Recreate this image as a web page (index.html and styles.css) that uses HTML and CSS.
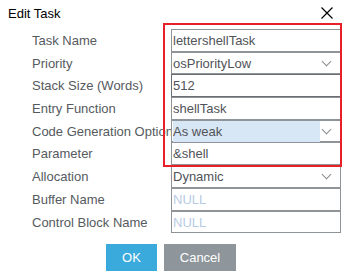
FILE: index.html
```html
<!DOCTYPE html>
<html lang="en">
<head>
    <meta charset="UTF-8">
    <title>Edit Task</title>
    <link rel="stylesheet" href="styles.css">
</head>
<body>
    <div class="dialog">
        <header class="dialog-header">
            <span class="dialog-title">Edit Task</span>
            <button class="close-button" aria-label="Close">
                <svg width="12" height="12" viewBox="0 0 12 12">
                    <path d="M0.5 0.5 L11.5 11.5 M11.5 0.5 L0.5 11.5" stroke="#000" stroke-width="1.2" fill="none"/>
                </svg>
            </button>
        </header>

        <form class="task-form">
            <div class="highlight-box"></div>

            <label class="field-label">Task Name</label>
            <div class="field">lettershellTask</div>

            <label class="field-label">Priority</label>
            <div class="field select">osPriorityLow<span class="chevron"></span></div>

            <label class="field-label">Stack Size (Words)</label>
            <div class="field focused">512</div>

            <label class="field-label">Entry Function</label>
            <div class="field">shellTask</div>

            <label class="field-label">Code Generation Option</label>
            <div class="field select selected"><span class="selected-text">As weak</span><span class="chevron"></span></div>

            <label class="field-label">Parameter</label>
            <div class="field">&amp;shell</div>

            <label class="field-label">Allocation</label>
            <div class="field select">Dynamic<span class="chevron"></span></div>

            <label class="field-label">Buffer Name</label>
            <div class="field placeholder">NULL</div>

            <label class="field-label">Control Block Name</label>
            <div class="field placeholder">NULL</div>
        </form>

        <div class="dialog-actions">
            <button class="btn btn-ok">OK</button>
            <button class="btn btn-cancel">Cancel</button>
        </div>
    </div>
</body>
</html>
```

FILE: styles.css
```css
/* Общие стили */
* {
    margin: 0;
    padding: 0;
    box-sizing: border-box;
    font-family: "Liberation Sans", Arial, sans-serif;
}

body {
    background: white;
}

.dialog {
    width: 342px;
    height: 274px;
    background: white;
    overflow: hidden;
}

/* Шапка */
.dialog-header {
    display: flex;
    justify-content: space-between;
    align-items: center;
    height: 26px;
    padding: 0 9px 0 8px;
}

.dialog-title {
    font-size: 13px;
    color: #000;
}

.close-button {
    border: none;
    background: transparent;
    display: flex;
    align-items: center;
    cursor: pointer;
}

/* Форма */
.task-form {
    position: relative;
    display: grid;
    grid-template-columns: 139px 170px;
    grid-auto-rows: 22.7px;
    padding: 3px 0 0 32px;
}

.field-label {
    font-size: 13px;
    color: #555a60;
    line-height: 23px;
    white-space: nowrap;
}

.field {
    position: relative;
    border: 1px solid #8f9499;
    font-size: 13px;
    color: #505358;
    line-height: 21px;
    padding-left: 1px;
    background: white;
}

.field.focused {
    border-color: #6a6e73;
}

.selected-text {
    display: block;
    width: 147px;
    background: #d8e7f5;
}

.field.placeholder {
    color: #b7cbe4;
}

.chevron {
    position: absolute;
    right: 10px;
    top: 5px;
    width: 7px;
    height: 7px;
    border-right: 1px solid #8a8e93;
    border-bottom: 1px solid #8a8e93;
    transform: rotate(45deg);
}

/* Красная рамка поверх полей */
.highlight-box {
    position: absolute;
    left: 163px;
    top: -3px;
    width: 179px;
    height: 144px;
    border: 2px solid #e8202a;
    pointer-events: none;
    z-index: 2;
}

/* Кнопки */
.dialog-actions {
    display: flex;
    gap: 7px;
    padding: 11px 0 0 106px;
}

.btn {
    height: 27px;
    border: none;
    color: white;
    font-size: 13px;
    cursor: pointer;
}

.btn-ok {
    width: 51px;
    background: #3aa9dc;
}

.btn-cancel {
    width: 72px;
    background: #8e959b;
}
```
